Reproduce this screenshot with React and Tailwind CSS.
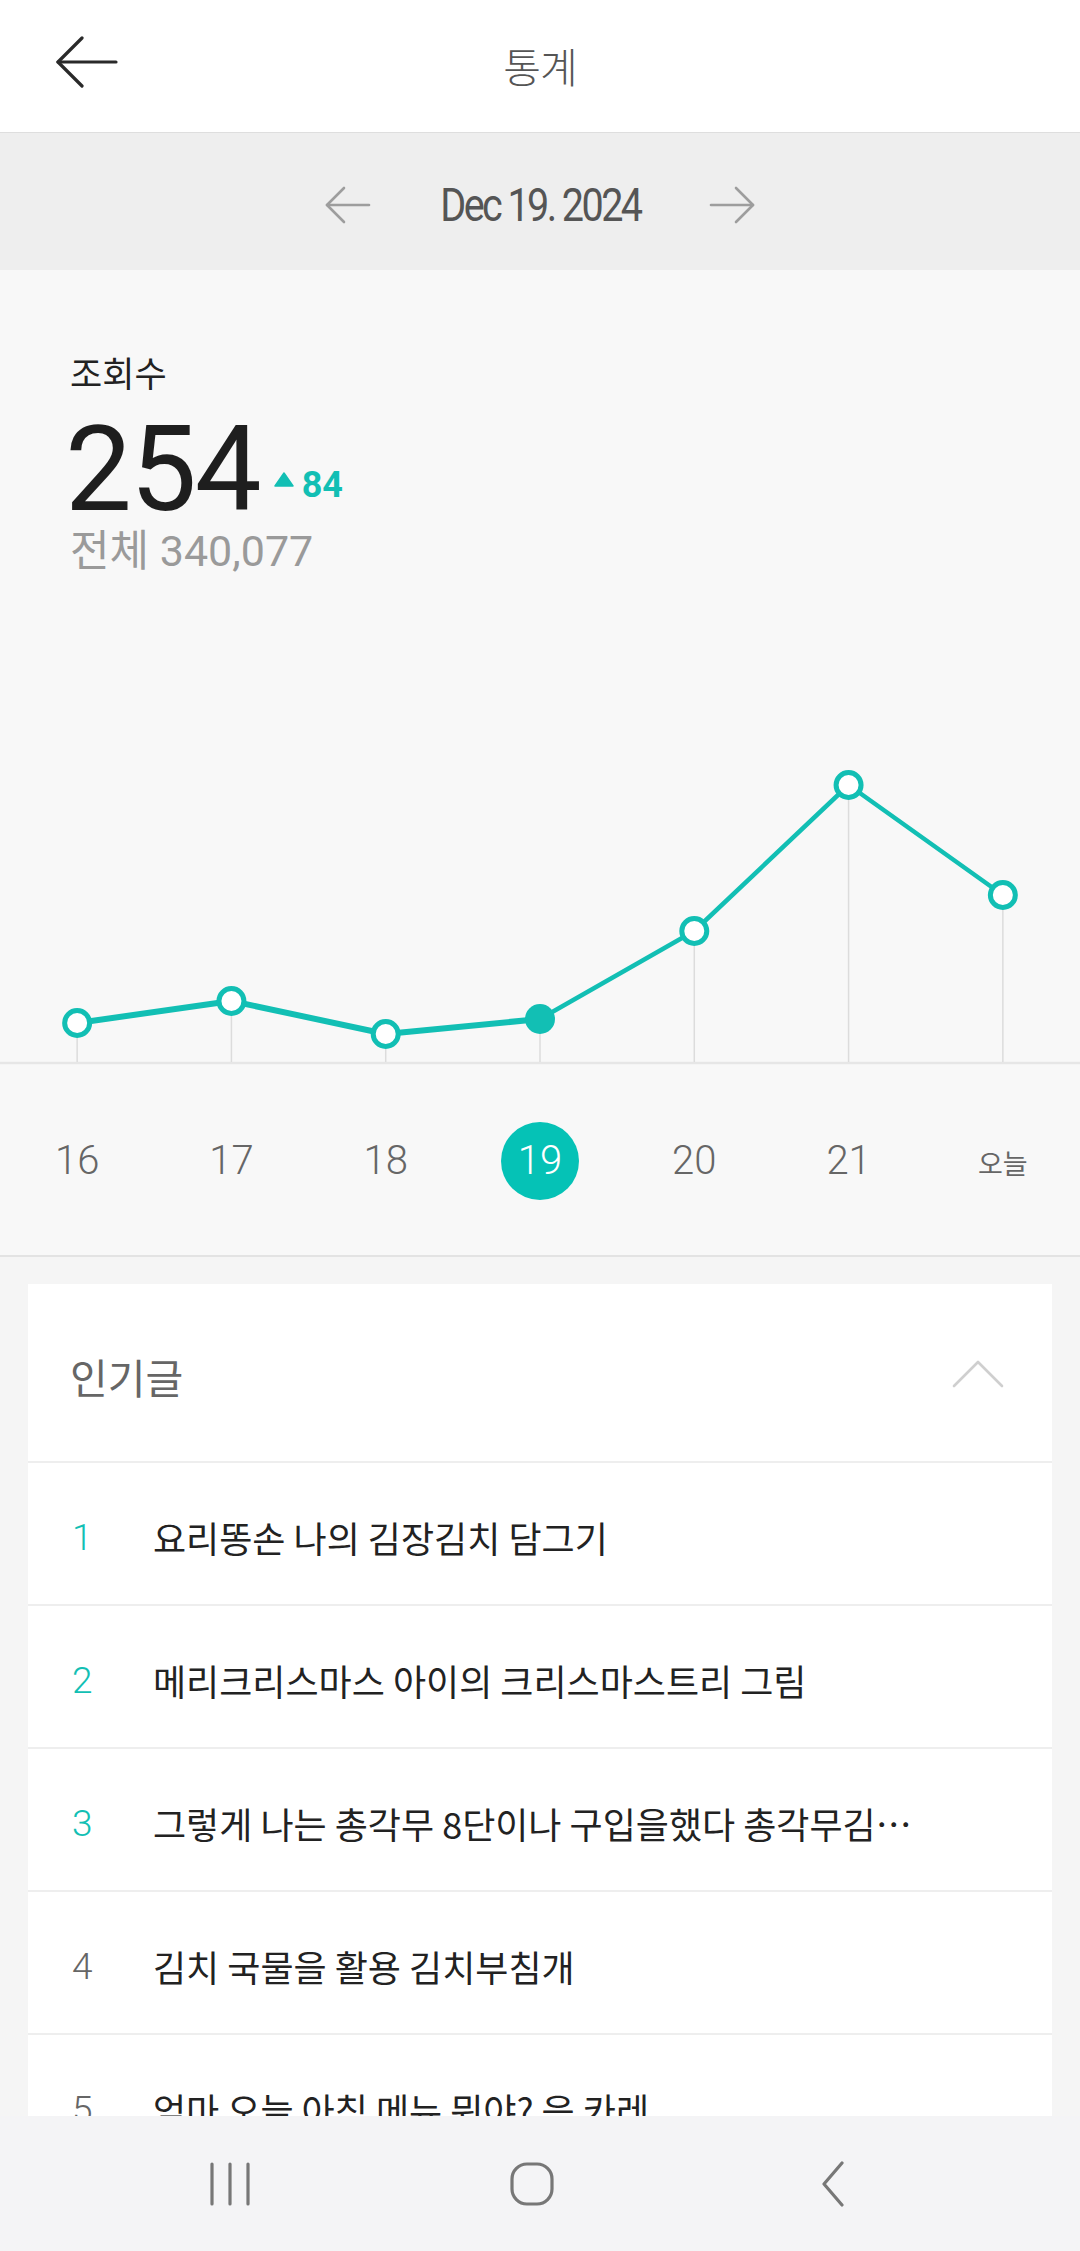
import React from "react";

const TEAL = "#12bfb4";
const xs = Array.from({ length: 7 }, (_, i) => (i + 0.5) * (1080 / 7));
const ys = [283, 261, 294, 279, 191, 45, 155];
const labels = ["16", "17", "18", "19", "20", "21", "오늘"];
const posts = [
  { n: 1, t: "요리똥손 나의 김장김치 담그기", hot: true },
  { n: 2, t: "메리크리스마스 아이의 크리스마스트리 그림", hot: true },
  { n: 3, t: "그렇게 나는 총각무 8단이나 구입을했다 총각무김…", hot: true },
  { n: 4, t: "김치 국물을 활용 김치부침개", hot: false },
  { n: 5, t: "엄마 오늘 아침 메뉴 뭐야? 응 카레", hot: false },
];

function Chart() {
  return (
    <svg width="1080" height="326" viewBox="0 0 1080 326" className="block">
      <line x1="0" y1="323" x2="1080" y2="323" stroke="#e6e6e6" strokeWidth="2.5" />
      {xs.map((x, i) => (
        <line key={"v" + i} x1={x} y1={ys[i] + 12} x2={x} y2="322" stroke="#dcdcdc" strokeWidth="1.5" />
      ))}
      {xs.slice(0, -1).map((x, i) => (
        <line
          key={"s" + i}
          x1={x}
          y1={ys[i]}
          x2={xs[i + 1]}
          y2={ys[i + 1]}
          stroke={TEAL}
          strokeWidth={i < 3 ? 6 : 4.5}
          strokeLinecap="round"
        />
      ))}
      {xs.map((x, i) =>
        i === 3 ? (
          <circle key={"c" + i} cx={x} cy={ys[i]} r="15" fill={TEAL} />
        ) : (
          <circle key={"c" + i} cx={x} cy={ys[i]} r="12.5" fill="#ffffff" stroke={TEAL} strokeWidth="5" />
        )
      )}
    </svg>
  );
}

export default function App() {
  return (
    <div className="w-[1080px] h-[2251px] flex flex-col overflow-hidden bg-[#f5f5f5] font-['Roboto','Noto_Sans_CJK_KR',sans-serif]">
      {/* Header */}
      <div className="h-[133px] shrink-0 bg-white border-b border-[#dedede] relative flex items-center justify-center">
        <svg width="66" height="52" viewBox="0 0 66 52" className="absolute left-[54px] top-[36px]" fill="none" stroke="#2a2a2a" strokeWidth="3.2" strokeLinecap="round" strokeLinejoin="round">
          <path d="M4 26 H62" />
          <path d="M28 2 L4 26 L28 50" />
        </svg>
        <span className="text-[41px] font-light text-[#555] font-['Noto_Sans_CJK_KR',sans-serif] tracking-[-1px]">통계</span>
      </div>

      {/* Date bar */}
      <div className="h-[137px] shrink-0 bg-[#eeeeee] flex items-center justify-center pt-[6px]">
        <svg width="48" height="38" viewBox="0 0 48 38" fill="none" stroke="#9d9d9d" strokeWidth="2.6" strokeLinecap="round" strokeLinejoin="round">
          <path d="M3 19 H45" />
          <path d="M20 2 L3 19 L20 36" />
        </svg>
        <span className="mx-[52px] text-[46px] text-[#555] tracking-[-3px] leading-none scale-x-[0.86] inline-block">Dec 19. 2024</span>
        <svg width="48" height="38" viewBox="0 0 48 38" fill="none" stroke="#9d9d9d" strokeWidth="2.6" strokeLinecap="round" strokeLinejoin="round">
          <path d="M3 19 H45" />
          <path d="M28 2 L45 19 L28 36" />
        </svg>
      </div>

      {/* Stats + chart */}
      <div className="h-[987px] shrink-0 bg-[#f8f8f8] border-b-2 border-[#e3e3e3] flex flex-col">
        <div className="h-[470px] shrink-0 pl-[70px] pt-[80px]">
          <div className="text-[35px] leading-[44px] text-[#222] font-['Noto_Sans_CJK_KR',sans-serif]">조회수</div>
          <div className="flex items-end mt-[17px] h-[118px]">
            <span className="text-[119px] leading-none text-[#1e1e1e] ml-[-5px] tracking-[-2px]">254</span>
            <span className="flex items-end ml-[14px] mb-[26px]">
              <svg width="20" height="15" viewBox="0 0 20 15" className="mb-[16px]">
                <path d="M10 1 L19 14 H1 Z" fill={TEAL} stroke={TEAL} strokeWidth="1.5" strokeLinejoin="round" />
              </svg>
              <span className="ml-[8px] text-[36px] leading-none font-bold text-[#12bfb4]">84</span>
            </span>
          </div>
          <div className="text-[43px] leading-[48px] text-[#9a9a9a] mt-[-2px]">전체 340,077</div>
        </div>
        <Chart />
        <div className="h-[189px] grid grid-cols-7 items-center">
          {labels.map((l, i) => (
            <div key={l} className="flex items-center justify-center">
              {i === 3 ? (
                <div className="w-[78px] h-[78px] rounded-full bg-[#05c2b6] flex items-center justify-center text-white text-[40px] font-light">
                  {l}
                </div>
              ) : i === 6 ? (
                <span className="text-[27px] text-[#666] font-['Noto_Sans_CJK_KR',sans-serif] pt-[6px]">{l}</span>
              ) : (
                <span className="text-[40px] font-light text-[#666]">{l}</span>
              )}
            </div>
          ))}
        </div>
      </div>

      {/* Popular posts */}
      <div className="flex-1 overflow-hidden px-[28px] pt-[27px]">
        <div className="bg-white">
          <div className="h-[179px] border-b-2 border-[#eeeeee] flex items-center justify-between pl-[42px] pr-[48px]">
            <span className="text-[41px] text-[#666] font-['Noto_Sans_CJK_KR',sans-serif] pt-[8px]">인기글</span>
            <svg width="52" height="30" viewBox="0 0 52 30" fill="none" stroke="#cfcfcf" strokeWidth="2.6" strokeLinecap="round" strokeLinejoin="round" className="mt-[2px]">
              <path d="M2 27 L26 3 L50 27" />
            </svg>
          </div>
          {posts.map((p) => (
            <div key={p.n} className="h-[143px] border-b-2 border-[#eeeeee] flex items-center pl-[44px]">
              <span className={"w-[81px] text-[37px] pt-[8px] " + (p.hot ? "text-[#12bfb4] font-light" : "text-[#666] font-light")}>
                {p.n}
              </span>
              <span className="text-[36px] text-[#222] font-['Noto_Sans_CJK_KR',sans-serif] whitespace-nowrap pt-[6px]">{p.t}</span>
            </div>
          ))}
        </div>
      </div>

      {/* Nav bar */}
      <div className="h-[135px] shrink-0 bg-[#f4f4f6] flex items-center pl-[208px] gap-[255px]">
        <svg width="46" height="46" viewBox="0 0 46 46" fill="none" stroke="#777" strokeWidth="3.2" strokeLinecap="round">
          <path d="M4 3 V43 M22 3 V43 M40 3 V43" />
        </svg>
        <svg width="46" height="46" viewBox="0 0 46 46" fill="none" stroke="#777" strokeWidth="3.2">
          <rect x="3" y="3" width="40" height="40" rx="15" />
        </svg>
        <svg width="46" height="46" viewBox="0 0 46 46" fill="none" stroke="#777" strokeWidth="3.2" strokeLinecap="round" strokeLinejoin="round">
          <path d="M32 2 L14 23 L32 44" />
        </svg>
      </div>
    </div>
  );
}
